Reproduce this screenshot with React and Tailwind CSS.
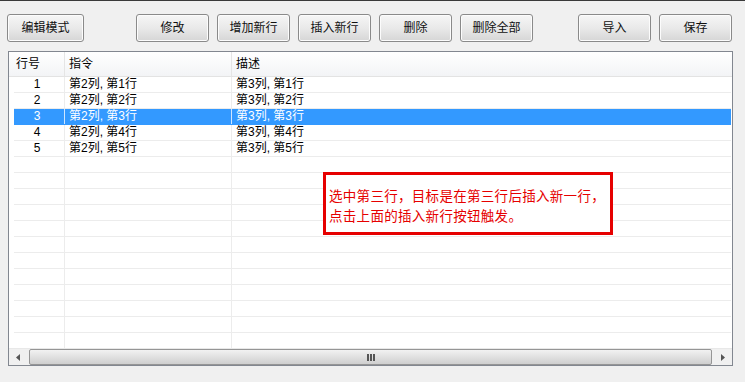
import React from "react";

const F = { fontFamily: '"Liberation Sans", "Noto Sans CJK SC", sans-serif' };

function Btn({ children, className = "" }) {
  return (
    <div
      className={
        "h-[28px] w-[73px] rounded-[3px] border border-[#8a8a8a] bg-gradient-to-b from-[#f6f6f6] via-[#e9e9e9] to-[#d6d6d6] flex items-center justify-center text-[12px] text-[#111] shadow-[inset_0_0_0_1px_#fcfcfc] " +
        className
      }
    >
      {children}
    </div>
  );
}

const rows = [1, 2, 3, 4, 5];

export default function App() {
  const empty = Array.from({ length: 12 });
  return (
    <div style={F} className="w-[745px] h-[382px] bg-[#f0f0f0] border-t border-[#3a3a3a] relative overflow-hidden">
      <div className="flex pt-[13px] pl-[7px] h-[49px]">
        <Btn className="w-[77px]">编辑模式</Btn>
        <Btn className="ml-[52px]">修改</Btn>
        <Btn className="ml-[8px]">增加新行</Btn>
        <Btn className="ml-[8px]">插入新行</Btn>
        <Btn className="ml-[8px]">删除</Btn>
        <Btn className="ml-[8px]">删除全部</Btn>
        <Btn className="ml-[45px]">导入</Btn>
        <Btn className="ml-[8px]">保存</Btn>
      </div>
      <div className="ml-[8px] mt-[1px] w-[725px] h-[315px] border border-[#828790] bg-white flex flex-col">
        <div className="h-[25px] shrink-0 flex text-[12px] text-black bg-gradient-to-b from-white to-[#f3f4f6] border-b border-[#e3e3e3]">
          <div className="w-[56px] pl-[7px] flex items-center border-r border-[#e5e5e5]">行号</div>
          <div className="w-[167px] pl-[4px] flex items-center border-r border-[#e5e5e5]">指令</div>
          <div className="flex-1 pl-[4px] flex items-center">描述</div>
        </div>
        <div className="flex-1 overflow-hidden pl-[5px] pr-[1px]">
          {rows.map((r) => {
            const sel = r === 3;
            return (
              <div
                key={r}
                className={
                  "h-[16px] flex text-[12px] leading-[15px] border-b " +
                  (sel ? "bg-[#3399ff] text-white border-[#3399ff]" : "text-black border-[#ececec]")
                }
              >
                <div className={"w-[51px] text-center pr-[4px] border-r " + (sel ? "border-[#cfe6ff]" : "border-[#ececec]")}>{r}</div>
                <div className={"w-[167px] pl-[4px] border-r " + (sel ? "border-[#cfe6ff]" : "border-[#ececec]")}>第2列, 第{r}行</div>
                <div className="flex-1 pl-[4px]">第3列, 第{r}行</div>
              </div>
            );
          })}
          {empty.map((_, i) => (
            <div key={i} className="h-[16px] flex border-b border-[#ececec]">
              <div className="w-[51px] border-r border-[#ececec]" />
              <div className="w-[167px] border-r border-[#ececec]" />
              <div className="flex-1" />
            </div>
          ))}
        </div>
        <div className="h-[17px] shrink-0 flex items-stretch bg-[#f0f0f0] border-t border-[#e8e8e8]">
          <div className="w-[19px] flex items-center justify-center">
            <svg width="5" height="7" viewBox="0 0 5 7"><path d="M4 0 L0 3.5 L4 7 Z" fill="#555" /></svg>
          </div>
          <div className="flex-1 mx-[1px] rounded-[2px] border border-[#959595] bg-gradient-to-b from-[#f2f2f2] via-[#e0e0e0] to-[#cfcfcf] flex items-center justify-center">
            <div className="flex gap-[1px]">
              <div className="w-[2px] h-[7px] bg-[#555]" />
              <div className="w-[2px] h-[7px] bg-[#555]" />
              <div className="w-[2px] h-[7px] bg-[#555]" />
            </div>
          </div>
          <div className="w-[19px] flex items-center justify-center">
            <svg width="5" height="7" viewBox="0 0 5 7"><path d="M1 0 L5 3.5 L1 7 Z" fill="#555" /></svg>
          </div>
        </div>
      </div>
      <div className="absolute left-[323px] top-[171px] w-[290px] h-[63px] border-[3px] border-[#e60000] bg-white text-[#e60000] text-[13.5px] leading-[20px] pl-[3px] pt-[12px] whitespace-nowrap tracking-[0.3px]">
        <div>选中第三行，目标是在第三行后插入新一行，</div>
        <div>点击上面的插入新行按钮触发。</div>
      </div>
    </div>
  );
}
